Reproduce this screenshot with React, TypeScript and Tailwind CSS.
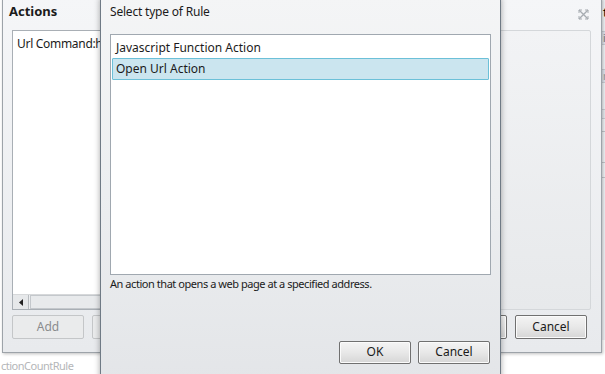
import React from "react";

const font = { fontFamily: '"Noto Sans", "Open Sans", sans-serif' };

const WinButton = ({ label, disabled = false, className = "" }: { label: string; disabled?: boolean; className?: string }) => (
  <div
    className={
      "flex items-center justify-center rounded-[2px] border text-[12px] " +
      (disabled
        ? "border-[#c4c6c8] bg-[#eaebec] text-[#8a8c8e] "
        : "border-[#707070] bg-gradient-to-b from-[#f4f4f4] via-[#e8e8e8] to-[#d6d6d6] text-[#1a1a1a] shadow-[inset_0_0_0_1px_#fbfbfb] ") +
      className
    }
  >
    {label}
  </div>
);

// strip of the window that sits behind everything, on the far right
const FarWindow = () => (
  <div className="absolute left-[601px] top-0 h-[340px] w-[20px] border-l border-[#b8bcc0] bg-[#eef0f3]">
    <div className="pl-[1px] pt-[3px] text-[13px] text-black">t</div>
    <div className="mt-[8px] h-[14px] border-y border-[#c8ccd2] bg-[#dde1ea] pl-[1px] text-[11px] leading-[12px] text-[#777]">i</div>
    <div className="mt-[24px] h-[14px] border-y border-[#c8ccd2] bg-[#dde1ea] pl-[1px] text-[11px] leading-[12px] text-[#999]">n</div>
    <div className="mt-[26px] h-[10px] border-y border-[#c8ccd2] bg-[#e4e7ec]" />
    <div className="mt-[12px] h-[1px] bg-[#c0c4c8]" />
    <div className="mt-[30px] h-[1px] bg-[#c0c4c8]" />
    <div className="mt-[14px] h-[1px] bg-[#c0c4c8]" />
  </div>
);

const ActionsWindow = () => (
  <div className="absolute left-[2px] top-[-2px] flex h-[355px] w-[600px] flex-col border border-[#9da3a9] bg-gradient-to-b from-[#f5f6f8] to-[#e8eaed] shadow-[1px_1px_3px_rgba(0,0,0,0.25)]">
    <div className="flex h-[31px] items-start justify-between pl-[6px] pr-[12px] pt-[3px]">
      <span className="text-[13px] font-bold text-[#1b1b1b]">Actions</span>
      <svg width="11" height="11" viewBox="0 0 11 11" className="mt-[7px]">
        <path d="M1 1 L10 10 M10 1 L1 10" stroke="#a8adb2" strokeWidth="1.4" fill="none" />
        <path d="M1 1 h3 M1 1 v3 M10 1 h-3 M10 1 v3 M1 10 h3 M1 10 v-3 M10 10 h-3 M10 10 v-3" stroke="#a8adb2" strokeWidth="1" fill="none" />
      </svg>
    </div>
    <div className="flex gap-[12px] pl-[9px] pr-[10px]">
      <div className="flex h-[280px] w-[420px] flex-col border border-[#a9afb5] bg-white">
        <div className="flex-1 pl-[4px] pt-[4px] text-[12px] tracking-[-0.3px] text-[#1b1b1b]">Url Command:http://</div>
        <div className="flex h-[15px] border-t border-[#d6d8da] bg-[#eceef0]">
          <div className="flex w-[16px] items-center justify-center border-r border-[#b8bcc0] bg-[#e6e8ea]">
            <svg width="4" height="7" viewBox="0 0 4 7">
              <path d="M4 0 L0 3.5 L4 7 Z" fill="#222" />
            </svg>
          </div>
          <div className="ml-[1px] flex-1 border border-[#c4c8cc] bg-[#e8eaec]" />
        </div>
      </div>
      <div className="h-[280px] flex-1 rounded-[2px] border border-[#d4d7da] bg-gradient-to-b from-[#f2f3f5] to-[#e7e9eb]" />
    </div>
    <div className="flex items-start justify-between pl-[9px] pr-[14px] pt-[5px]">
      <div className="flex gap-[8px]">
        <WinButton label="Add" disabled className="h-[24px] w-[72px]" />
        <WinButton label="Remove" disabled className="h-[24px] w-[72px]" />
      </div>
      <div className="flex gap-[8px]">
        <WinButton label="OK" className="h-[24px] w-[72px]" />
        <WinButton label="Cancel" className="h-[24px] w-[72px]" />
      </div>
    </div>
  </div>
);

const RuleDialog = () => (
  <div className="absolute left-[100px] top-[-2px] flex h-[390px] w-[401px] flex-col border-x border-[#6f7a85] bg-gradient-to-b from-[#f4f5f6] via-[#eceef0] to-[#e3e5e8] shadow-[0_0_6px_rgba(0,0,0,0.35)]">
    <div className="pl-[9px] pt-[5px] text-[12px] tracking-[-0.2px] text-[#1b1b1b]">Select type of Rule</div>
    <div className="mx-[9px] mt-[13px] flex h-[241px] flex-col border border-[#a0a8b0] bg-white pt-[2px]">
      <div className="mx-[1px] flex h-[21px] items-center pl-[4px] text-[12px] text-[#1b1b1b]">Javascript Function Action</div>
      <div className="mx-[1px] flex h-[22px] items-center rounded-[1px] border border-[#6cc0d8] bg-[#cbe5ef] pl-[3px] text-[12px] text-[#1b1b1b]">
        Open Url Action
      </div>
    </div>
    <div className="pl-[9px] pt-[1px] text-[11px] tracking-[-0.45px] text-[#1b1b1b]">An action that opens a web page at a specified address.</div>
    <div className="mt-[48px] flex justify-end gap-[7px] pr-[10px]">
      <WinButton label="OK" className="h-[23px] w-[72px]" />
      <WinButton label="Cancel" className="h-[23px] w-[72px]" />
    </div>
  </div>
);

export default function App() {
  return (
    <div className="relative h-[374px] w-[605px] overflow-hidden bg-white" style={font}>
      <FarWindow />
      <ActionsWindow />
      <div className="absolute left-[1px] top-[358px] text-[11px] tracking-[-0.5px] text-[#b4b6b8]">ctionCountRule</div>
      <RuleDialog />
    </div>
  );
}
